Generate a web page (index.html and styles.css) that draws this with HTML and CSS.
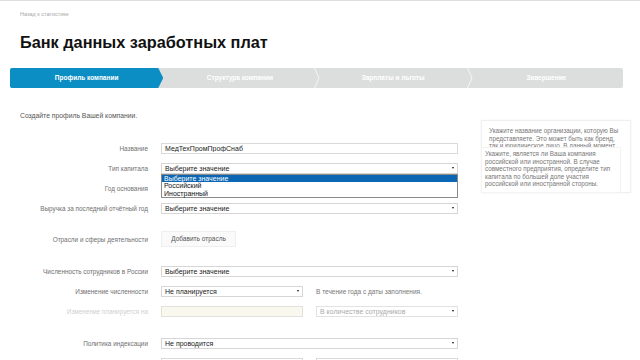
FILE: index.html
```html
<!DOCTYPE html>
<html>
<head>
	<meta charset="UTF-8">
	<title>Банк данных заработных плат</title>
	<link rel="stylesheet" href="styles.css">
</head>
<body>
	<div class="page">
		<a class="back" href="#">Назад к статистике</a>
		<h1>Банк данных заработных плат</h1>

		<ul class="steps">
			<li class="active">Профиль компании</li>
			<li>Структура компании<svg class="sep" viewBox="0 0 6 20"><path d="M0.5 0L5 10L0.5 20" stroke="#f4f5f4" fill="none"/></svg></li>
			<li>Зарплаты и льготы<svg class="sep" viewBox="0 0 6 20"><path d="M0.5 0L5 10L0.5 20" stroke="#f4f5f4" fill="none"/></svg></li>
			<li>Завершение</li>
		</ul>

		<p class="intro">Создайте профиль Вашей компании.</p>

		<div class="form">
			<div class="group">
				<div class="row">
					<label>Название</label>
					<div class="field"><input class="text" type="text" value="МедТехПромПрофСнаб"></div>
				</div>
				<div class="row">
					<label>Тип капитала</label>
					<div class="field">
						<div class="select">Выберите значение</div>
						<ul class="options">
							<li class="hover">Выберите значение</li>
							<li>Российский</li>
							<li>Иностранный</li>
						</ul>
					</div>
				</div>
				<div class="row">
					<label>Год основания</label>
					<div class="field"><input class="text" type="text" value=""></div>
				</div>
				<div class="row">
					<label>Выручка за последний отчётный год</label>
					<div class="field"><div class="select">Выберите значение</div></div>
				</div>
			</div>

			<div class="group">
				<div class="row">
					<label>Отрасли и сферы деятельности</label>
					<div class="field"><a class="btn" href="javascript:;">Добавить отрасль</a></div>
				</div>
			</div>

			<div class="group">
				<div class="row">
					<label>Численность сотрудников в России</label>
					<div class="field"><div class="select">Выберите значение</div></div>
				</div>
				<div class="row">
					<label>Изменение численности</label>
					<div class="field half">
						<div class="select">Не планируется</div>
						<span class="note">В течение года с даты заполнения.</span>
					</div>
				</div>
				<div class="row disabled">
					<label>Изменение планируется на</label>
					<div class="field half">
						<input class="text" type="text" value="" disabled>
						<div class="select">В количестве сотрудников</div>
					</div>
				</div>
			</div>

			<div class="group">
				<div class="row">
					<label>Политика индексации</label>
					<div class="field"><div class="select">Не проводится</div></div>
				</div>
				<div class="row">
					<label></label>
					<div class="field half">
						<input class="text" type="text" value="">
						<input class="text" type="text" value="">
					</div>
				</div>
			</div>

			<div class="hint hint-name">Укажите название организации, которую Вы<br>представляете. Это может быть как бренд,<br>так и юридическое лицо. В данный момент</div>
			<div class="hint hint-capital">Укажите, является ли Ваша компания<br>российской или иностранной. В случае<br>совместного предприятия, определите тип<br>капитала по большей доле участия<br>российской или иностранной стороны.</div>
		</div>
	</div>
</body>
</html>
```

FILE: styles.css
```css
*{
	margin: 0;
	padding: 0;
	box-sizing: border-box;
}
a{
	text-decoration: none;
}
li{
	list-style: none;
}
body{
	font-family: "Liberation Sans", Arial, sans-serif;
	background: #fff;
	border-top: 1px solid #dedede;
	height: 360px;
	overflow: hidden;
}
.page{
	padding: 0 10px 0 20px;
}
.back{
	display: block;
	margin-top: 9px;
	font-size: 5.5px;
	line-height: 8px;
	color: #a8a8a8;
}
h1{
	margin-top: 14px;
	font-size: 16.3px;
	line-height: 20px;
	font-weight: bold;
	color: #111;
}

/* шаги */
.steps{
	display: flex;
	width: 613px;
	height: 20px;
	margin: 16px 0 0 -10px;
	background: #dcdedd;
	border-radius: 2px;
}
.steps li{
	flex: 1;
	position: relative;
	font-size: 6.5px;
	font-weight: bold;
	line-height: 20px;
	text-align: center;
	color: #fff;
}
.steps li.active{
	background: #0b8ec3;
	border-radius: 2px 0 0 2px;
	clip-path: polygon(0 0, calc(100% - 5px) 0, 100% 50%, calc(100% - 5px) 100%, 0 100%);
}
.steps .sep{
	position: absolute;
	right: -3px;
	top: 0;
	width: 6px;
	height: 20px;
}

.intro{
	margin-top: 23px;
	font-size: 6.8px;
	line-height: 10px;
	color: #555;
}

/* форма */
.form{
	position: relative;
	margin-top: 17px;
}
.group + .group{
	margin-top: 11px;
}
.group:nth-child(3), .group:nth-child(4){
	margin-top: 12px;
}
.row{
	display: grid;
	grid-template-columns: 128px 297px;
	column-gap: 13px;
	align-items: center;
	height: 20px;
}
.row label{
	text-align: right;
	font-size: 6.4px;
	color: #707070;
}
.field{
	position: relative;
	display: flex;
	align-items: center;
}
.field.half{
	display: grid;
	grid-template-columns: 142px 142px;
	column-gap: 13px;
}
.text{
	display: block;
	width: 100%;
	height: 11px;
	padding: 0 3px;
	border: 1px solid #dadada;
	font-family: "Liberation Sans", Arial, sans-serif;
	font-size: 7px;
	color: #222;
	outline: none;
	background: #fff;
}
.select{
	position: relative;
	width: 100%;
	height: 11px;
	padding: 0 3px;
	border: 1px solid #d6d6d6;
	font-size: 7px;
	line-height: 9px;
	color: #222;
	background: #fff;
}
.select:after{
	content: "";
	position: absolute;
	right: 3px;
	top: 3px;
	border-left: 1.5px solid transparent;
	border-right: 1.5px solid transparent;
	border-top: 2.5px solid #111;
}
.options{
	position: absolute;
	left: 0;
	right: 0;
	top: 100%;
	z-index: 10;
	border: 1px solid #8a8a8a;
	background: #fff;
}
.options li{
	padding: 0 2px;
	font-size: 7px;
	line-height: 7.5px;
	color: #111;
}
.options li.hover{
	background: #0b66b3;
	color: #fff;
}
.note{
	font-size: 6.5px;
	color: #777;
}
.btn{
	display: block;
	width: 75px;
	height: 16px;
	line-height: 14px;
	text-align: center;
	border: 1px solid #efefef;
	background: #fafafa;
	font-size: 6.5px;
	color: #555;
}
.disabled label{
	color: #cfcfcf;
}
.disabled .text{
	background: #f8f8ef;
	border-color: #e2e2dc;
}
.disabled .select{
	color: #aaa;
	border-color: #e2e2e2;
}

/* подсказки */
.hint{
	position: absolute;
	left: 461px;
	background: #fff;
	font-size: 6.3px;
	line-height: 7.6px;
	color: #777;
}
.hint-name{
	top: -18px;
	width: 150px;
	height: 73px;
	padding: 6px 7px;
	border: 1px solid #f0f0f0;
	box-shadow: 0 0 2px rgba(0,0,0,0.06);
}
.hint-capital{
	top: 9px;
	width: 140px;
	height: 46px;
	padding: 2px 3px;
	border: 1px solid #f3f3f3;
}
```
